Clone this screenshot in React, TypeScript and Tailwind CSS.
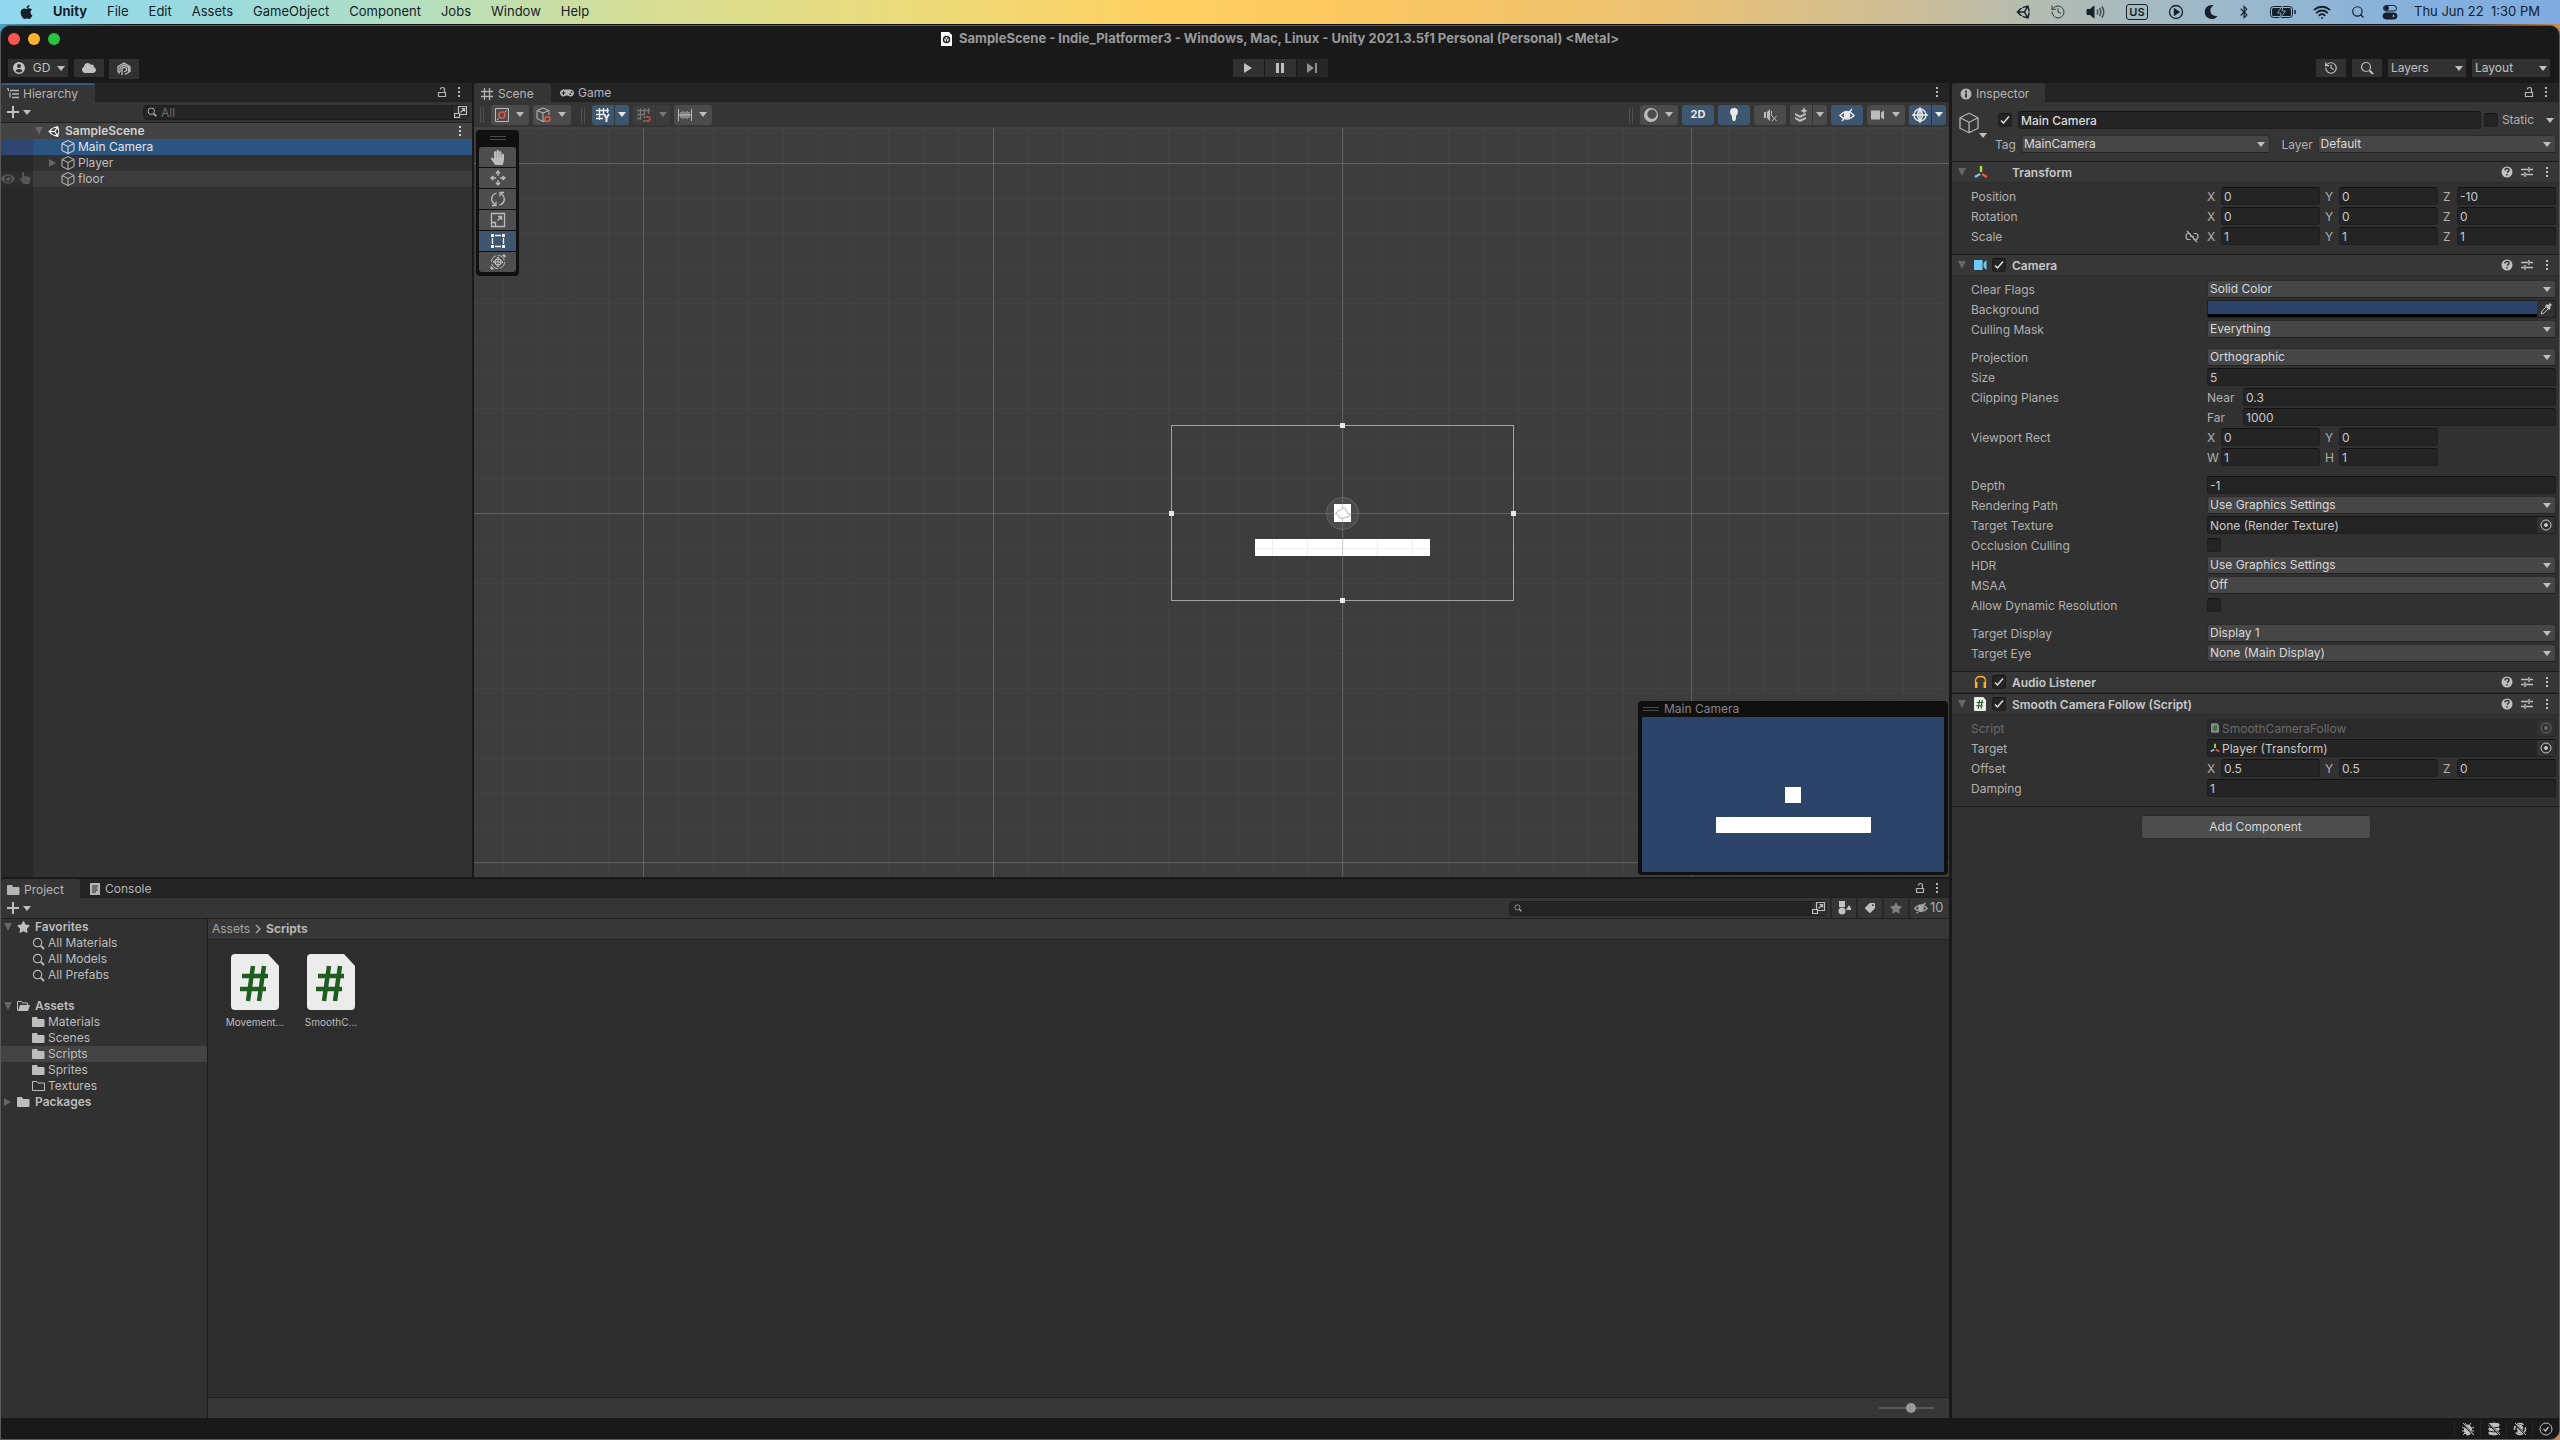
import React from "react";
import { FaApple, FaUnity, FaHandPaper, FaCloud, FaGamepad, FaMoon, FaStar, FaBluetoothB, FaEye, FaHandPointer, FaTag } from "react-icons/fa";
import { Wifi, Search, History } from "lucide-react";

type SvgProps = { className?: string; children?: React.ReactNode; box?: string; w?: number };

function Ico({ className = "size-4", children, box = "0 0 16 16", w = 1 }: SvgProps) {
  return (
    <svg className={"shrink-0 " + className} viewBox={box} fill="none" stroke="currentColor" strokeWidth={w}>
      {children}
    </svg>
  );
}

const Caret = ({ className = "w-2 h-[5px]" }: { className?: string }) => (
  <svg className={"shrink-0 " + className} viewBox="0 0 8 5" fill="currentColor">
    <path d="M0 0h8L4 5z" />
  </svg>
);

const Fold = ({ open = true }: { open?: boolean }) => (
  <svg className="size-2 shrink-0 text-[#666]" viewBox="0 0 8 8" fill="currentColor">
    {open ? <path d="M0 0h8L4 8z" /> : <path d="M0 0v8l7-4z" />}
  </svg>
);

const Dots = ({ className = "w-4 h-4" }: { className?: string }) => (
  <svg className={"shrink-0 " + className} viewBox="0 0 16 16" fill="currentColor">
    <path d="M7 3h2v2H7zM7 7h2v2H7zM7 11h2v2H7z" />
  </svg>
);

const Lock = () => (
  <Ico className="size-4">
    <path d="M4.500 8.500h7v4h-7z M10.500 8.500V5.500q0-2-2-2t-2 2" strokeWidth="1.200" />
  </Ico>
);

const Cube = ({ className = "size-4", w = 1 }: { className?: string; w?: number }) => (
  <Ico className={className} w={w}>
    <path d="M8 1.500l6 3v7l-6 3-6-3v-7z M2 4.500l6 3 6-3 M8 7.500v7" strokeLinejoin="round" />
  </Ico>
);

const Plus = () => (
  <Ico className="size-3" box="0 0 12 12" w={2}>
    <path d="M6 0v12M0 6h12" />
  </Ico>
);

const Folder = ({ open = false, empty = false }: { open?: boolean; empty?: boolean }) => (
  <svg className="h-3 w-[13px] shrink-0" viewBox="0 0 13 12" fill="currentColor">
    {open ? (
      <>
        <path d="M.5 10.500v-9h4l1 1.500h5v2" fill="none" stroke="currentColor" />
        <path d="M3 5h10l-2 6H1z" />
      </>
    ) : empty ? (
      <path d="M.5 1.500h4.500l1 1.500h6.500v7.500H.5z" fill="none" stroke="currentColor" />
    ) : (
      <path d="M0 2q0-1 1-1h4l1 2h5.500q1 0 1 1v6q0 1-1 1H1q-1 0-1-1z" />
    )}
  </svg>
);

const Mag = ({ className = "size-3.5" }: { className?: string }) => (
  <Ico className={className} box="0 0 14 14" w={1.2}>
    <circle cx="6" cy="6" r="4.500" />
    <path d="M9.500 9.500l3.500 3.500" strokeWidth="2" />
  </Ico>
);

const Jump = () => (
  <Ico className="size-3.5" box="0 0 14 14" w={1.2}>
    <path d="M4.500 8V1.500h8v8H6M.5 8.500h5v4h-5zM6.500 7.500l4-4M7.500 3.500h3v3" />
  </Ico>
);

const Axes = ({ className = "size-3.5" }: { className?: string }) => (
  <svg className={"shrink-0 " + className} viewBox="0 0 14 14" fill="none" strokeWidth="2.500">
    <path d="M7 1v6" stroke="#a6e22e" />
    <path d="M6 9l-5 3" stroke="#6cc9f7" />
    <path d="M8 9l5 3" stroke="#f1562f" />
  </svg>
);

const ScriptIcon = ({ className = "h-3.5 w-3", dim = false }: { className?: string; dim?: boolean }) => (
  <svg className={"shrink-0 " + className} viewBox="0 0 48 56">
    <path d="M4 0h33l11 12v40q0 4-4 4H4q-4 0-4-4V4q0-4 4-4z" fill={dim ? "#8a8a8a" : "#ececec"} />
    <path d="M22 12l-5 35M33 12l-5 35M11 22h26M9 35h26" stroke="#1e5c20" strokeWidth="4.500" fill="none" />
  </svg>
);

const EyeSlash = ({ className = "size-4" }: { className?: string }) => (
  <Ico className={className} w={1.5}>
    <path d="M1 8.500q7-8 14 0-7 7-14 0z M13 2L3 14" />
    <circle cx="8" cy="8" r="2.500" fill="currentColor" />
  </Ico>
);

/* ---------- macOS menu bar ---------- */

function MenuBar() {
  const items = ["File", "Edit", "Assets", "GameObject", "Component", "Jobs", "Window", "Help"];
  return (
    <header className="flex h-6 shrink-0 items-center justify-between bg-[linear-gradient(90deg,#90d8ee_0%,#9cdbdc_9%,#b2dfc0_16%,#d6de95_25%,#ebdc7d_35%,#fdd061_45%,#fcc85f_52%,#ecc273_65%,#cabd99_75%,#b2bcb4_80%,#9bb8cb_87%,#83b1df_95%,#7fabdf_100%)] text-[13px] text-[#14202a]">
      <nav className="flex items-center pl-[19px]">
        <button aria-label="Apple menu" className="mr-[19px]">
          <FaApple className="h-4 w-[15px]" />
        </button>
        <button className="mr-5 font-bold">Unity</button>
        <span className="flex gap-5">
          {items.map((i) => (
            <button key={i}>{i}</button>
          ))}
        </span>
      </nav>
      <div className="flex items-center pr-5">
        <div className="mr-4 flex items-center gap-5">
          <FaUnity className="-mr-0.5 size-4" />
          <History className="size-4 opacity-80" strokeWidth={1.5} />
          <Ico className="h-4 w-5" box="0 0 20 16">
            <path d="M1 5.500h3l4-3.500v12L4 10.500H1z" fill="currentColor" />
            <path d="M11 5.500q1.500 2.500 0 5M13.500 4q2.500 4 0 8M16 2.500q3.500 5.500 0 11" strokeWidth="1.500" opacity=".7" />
          </Ico>
          <span className="flex h-4 w-[22px] items-center justify-center rounded-[3px] border border-[#14202a] text-[11px] font-semibold">US</span>
          <Ico className="size-4" w={1.3}>
            <circle cx="8" cy="8" r="6.500" />
            <path d="M6.500 5v6l4.500-3z" fill="currentColor" />
          </Ico>
          <FaMoon className="size-3.5" />
          <FaBluetoothB className="h-3.5 w-3" />
          <Ico className="-mr-[3px] h-3.5 w-[26px]" box="0 0 26 14">
            <rect x=".5" y="1.500" width="22" height="11" rx="3" />
            <rect x="2" y="3" width="19" height="8" rx="1.500" fill="currentColor" stroke="none" />
            <path d="M25 5v4" strokeWidth="1.500" />
            <path d="M13 0L7.500 8h3.500l-1.500 6L15.500 6H12z" fill="currentColor" stroke="#a5bcc2" strokeWidth=".8" />
          </Ico>
          <Wifi className="size-[18px]" strokeWidth={2.5} />
          <Search className="-mr-[3px] size-3.5" strokeWidth={2} />
          <Ico className="size-4">
            <rect x="1.500" y="1.500" width="13" height="5.500" rx="2.700" />
            <rect x="1" y="9" width="14" height="6" rx="3" fill="currentColor" />
            <circle cx="4.500" cy="4.200" r="2" fill="currentColor" />
            <circle cx="11.500" cy="12" r="1.500" fill="#a5bcc2" />
          </Ico>
        </div>
        <span className="whitespace-pre">Thu Jun 22  1:30 PM</span>
      </div>
    </header>
  );
}

/* ---------- Window title and main toolbar ---------- */

function TopArea() {
  const box = "flex h-[18px] items-center bg-[#313131] text-[#c0c0c0]";
  return (
    <div className="shrink-0 bg-[#191919]">
      <div className="relative flex h-[26px] items-center justify-center">
        <div className="absolute left-[7px] flex gap-2">
          <button aria-label="Close" className="size-3 rounded-full bg-[#ff5450]" />
          <button aria-label="Minimize" className="size-3 rounded-full bg-[#fdb32d]" />
          <button aria-label="Zoom" className="size-3 rounded-full bg-[#29c340]" />
        </div>
        <h1 className="flex items-center gap-[7px] text-[13px] font-bold text-[#9a9a9a]">
          <svg className="h-3.5 w-[11px]" viewBox="0 0 11 14">
            <path d="M0 0h8l3 3v11H0z" fill="#fff" />
            <circle cx="5.500" cy="7.500" r="3" fill="none" stroke="#222" strokeWidth="1.500" />
            <path d="M5.500 7.500v3M5.500 7.500l-2.500-2M5.500 7.500l2.500-2" stroke="#222" />
          </svg>
          SampleScene - Indie_Platformer3 - Windows, Mac, Linux - Unity 2021.3.5f1 Personal (Personal) &lt;Metal&gt;
        </h1>
      </div>
      <div className="grid h-[31px] grid-cols-3 items-start px-[7px] pt-[7px] text-xs">
        <div className="flex items-start">
          <button className={box + " w-[60px] justify-between pl-1 pr-[3px] text-[#a4a4a4]"}>
            <Ico className="size-3.5" box="0 0 14 14" w={0}>
              <path fillRule="evenodd" d="M7 1a6 6 0 100 12A6 6 0 007 1zm0 2a2 2 0 110 4 2 2 0 010-4zM3.500 10q.5-2 3.500-2t3.500 2q-3.500 3-7 0z" fill="currentColor" />
            </Ico>
            GD
            <Caret />
          </button>
          <button aria-label="Cloud" className={box + " ml-1.5 w-[30px] justify-center"}>
            <FaCloud className="size-3.5" />
          </button>
          <button aria-label="Plastic SCM" className="ml-[5px] flex h-5 w-[30px] items-center justify-center bg-[#313131] text-[#c0c0c0]">
            <Ico className="size-4" w={1.3}>
              <path d="M3.500 12.500L2 10.500v-5L8 2l6 3.500v5L9 13.500 M6 14V7.500L8 6l2.500 1.500v2L8 11 M4 11V6.500L8 4l4.500 2.500v4" />
            </Ico>
          </button>
        </div>
        <div className="flex justify-center gap-px">
          <button aria-label="Play" className={box + " w-[31px] justify-center"}>
            <Ico className="size-3" box="0 0 12 12"><path d="M2 1v10l8-5z" fill="currentColor" stroke="none" /></Ico>
          </button>
          <button aria-label="Pause" className={box + " w-[31px] justify-center"}>
            <Ico className="size-3" box="0 0 12 12"><path d="M2 1h3v10H2zM7 1h3v10H7z" fill="currentColor" stroke="none" /></Ico>
          </button>
          <button aria-label="Step" className="flex h-[18px] w-[31px] items-center justify-center bg-[#262626] text-[#8f8f8f]">
            <Ico className="size-3" box="0 0 12 12"><path d="M1 1v10l7-5zM9 1h2v10H9z" fill="currentColor" stroke="none" /></Ico>
          </button>
        </div>
        <div className="flex justify-end gap-1.5 pr-0.5">
          <button aria-label="Undo history" className={box + " w-[30px] justify-center"}><History className="size-3.5" /></button>
          <button aria-label="Search" className={box + " w-[30px] justify-center"}><Mag /></button>
          <button className={box + " w-[78px] justify-between pl-[3px] pr-[3px] text-[#a4a4a4]"}>Layers<Caret /></button>
          <button className={box + " w-[78px] justify-between pl-[3px] pr-[3px] text-[#a4a4a4]"}>Layout<Caret /></button>
        </div>
      </div>
    </div>
  );
}

/* ---------- Shared panel parts ---------- */

function TabBar({ children, actions }: { children: React.ReactNode; actions?: React.ReactNode }) {
  return (
    <div className="flex h-[19px] shrink-0 items-stretch justify-between border-b border-[#202020] bg-[#242424] text-[#b4b4b4]">
      <div className="flex">{children}</div>
      <div className="flex items-center gap-px pr-px">{actions}</div>
    </div>
  );
}

function Tab({ icon, label, width, active, focus }: { icon: React.ReactNode; label: string; width: string; active?: boolean; focus?: boolean }) {
  return (
    <button
      className={
        "flex items-center gap-1 rounded-t-[3px] pl-1.5 text-xs " + width +
        (active ? " -mb-px bg-[#353535]" : "") + (focus ? " border-t-2 border-[#2c5d87]" : " pt-0.5")
      }
    >
      {icon}
      {label}
    </button>
  );
}

/* ---------- Hierarchy ---------- */

function Hierarchy() {
  return (
    <section aria-label="Hierarchy" className="flex w-[471px] shrink-0 flex-col bg-[#313131]">
      <TabBar actions={<><Lock /><Dots className="mr-1 size-4" /></>}>
        <Tab active focus label="Hierarchy" width="w-[94px]" icon={
          <Ico className="size-3" box="0 0 12 12" w={1.3}><path d="M3 2.500h9M5 6h7M5 9.500h7M0 1h2M1 2.500h1M3 4.500v5" /></Ico>
        } />
      </TabBar>
      <div className="flex h-[21px] shrink-0 items-center justify-between border-b border-[#202020] bg-[#353535] pl-1.5 pr-[3px] text-[#c0c0c0]">
        <button aria-label="Create" className="flex items-center gap-1"><Plus /><Caret /></button>
        <div className="flex h-[15px] w-[326px] items-center rounded-[4px] border border-[#1e1e1e] bg-[#242424] pl-[3px]">
          <Mag className="size-2.5" />
          <input aria-label="Search hierarchy" placeholder="All" className="ml-1 min-w-0 flex-1 bg-transparent text-xs leading-3 outline-none placeholder:text-[#6d6d6d]" />
          <span className="flex h-[13px] w-4 items-center justify-center border-l border-[#1e1e1e] bg-[#2d2d2d]"><Jump /></span>
        </div>
      </div>
      <div className="flex h-4 shrink-0 items-center justify-between bg-[#434343] pl-[34px] text-xs font-semibold text-[#d0d0d0]">
        <span className="flex items-center"><Fold /><FaUnity className="ml-[5px] mr-1 size-[13px] text-white" />SampleScene</span>
        <Dots className="mr-1 size-4" />
      </div>
      <ul className="flex-1 bg-[linear-gradient(90deg,#282828_32px,#313131_32px)] text-xs text-[#bdbdbd]">
        <li className="flex h-4 items-center bg-[linear-gradient(90deg,#2f4672_32px,#2a5580_32px)] pl-[59px] text-[#e4e4e4]"><Cube /><span className="ml-0.5">Main Camera</span></li>
        <li className="flex h-4 items-center pl-12"><Fold open={false} /><Cube className="ml-[3px] size-4" /><span className="ml-0.5">Player</span></li>
        <li className="flex h-4 items-center bg-[linear-gradient(90deg,#2d2d2d_32px,#3c3c3c_32px)]">
          <span className="flex w-[59px] gap-1 text-[#585858]"><FaEye className="size-3.5" /><FaHandPointer className="size-3" /></span>
          <Cube /><span className="ml-0.5">floor</span>
        </li>
      </ul>
    </section>
  );
}

/* ---------- Scene view ---------- */

const Grip = () => <span className="h-4 w-1 border-x border-[#505050]" />;

function SBtn({ children, w = "w-8", on, dim, left, right, label }: { children: React.ReactNode; w?: string; on?: boolean; dim?: boolean; left?: boolean; right?: boolean; label: string }) {
  return (
    <button
      aria-label={label}
      className={
        "flex h-5 items-center justify-center gap-1.5 " + w +
        (on ? " bg-[#3e566f] text-[#e8e8e8]" : dim ? " bg-[#3c3c3c] text-[#767676]" : " bg-[#4b4b4b] text-[#bcbcbc]") +
        (left ? " rounded-l-[3px]" : right ? " ml-px rounded-r-[3px]" : " rounded-[3px]")
      }
    >
      {children}
    </button>
  );
}

function SceneToolbar() {
  return (
    <div className="flex h-[26px] shrink-0 items-center justify-between border-b border-[#404040] bg-[#353535] pl-1.5 pr-[3px]">
      <div className="flex items-center">
        <Grip />
        <div className="ml-[7px] flex gap-1">
          <SBtn label="Pivot" w="w-[38px]">
            <Ico className="-ml-0.5 size-4"><path d="M1.500 1.500h13v13h-13z" /><path d="M3 13l2-2M11 5l2-2" /><circle cx="8" cy="8" r="3" stroke="#e2583a" strokeWidth="1.500" /></Ico><Caret />
          </SBtn>
          <SBtn label="Handle rotation" w="w-[38px]">
            <Ico className="-ml-0.5 size-4"><path d="M9 14l-2 .5-6-3v-8l6-2.500 6 2.500V8M1 3.500l6 2.500 6-2.500M7 6v8" /><circle cx="11.500" cy="12" r="2.500" stroke="#e2583a" strokeWidth="1.500" /></Ico><Caret />
          </SBtn>
        </div>
        <span className="ml-2.5 flex"><Grip /></span>
        <div className="ml-[7px] flex gap-1">
          <div className="flex">
            <SBtn label="Grid" on left w="w-[22px]">
              <Ico w={1.3}><path d="M4.500 1v12M8.500 1v7M12.500 1v5M1 3.500h13M1 7.500h8M1 11.500h7" /><path d="M9 7l2.500 4L14 7M11.500 10.500V15" strokeWidth="2" /></Ico>
            </SBtn>
            <SBtn label="Grid options" on right w="w-3.5"><Caret /></SBtn>
          </div>
          <div className="flex">
            <SBtn label="Snap" dim left w="w-[22px]">
              <Ico w={1.3}><path d="M4.500 1v12M8.500 1v6M12.500 1v6M1 3.500h13M1 7.500h8M1 11.500h4M7 10h2M7 14h2" /><path d="M9.500 10H12q2 0 2 2t-2 2H9.500" stroke="#a8503c" strokeWidth="2" /></Ico>
            </SBtn>
            <SBtn label="Snap options" dim right w="w-3.5"><Caret /></SBtn>
          </div>
          <SBtn label="Snap increment" w="w-[38px]">
            <Ico className="-ml-0.5 size-4"><path d="M1.500 2v12M14.500 2v12M4 5v6M6 4v8M8 5v6M10 4v8M12 5v6M1 8h14" /></Ico><Caret />
          </SBtn>
        </div>
      </div>
      <div className="flex items-center">
        <Grip />
        <div className="ml-[7px] flex gap-1">
          <SBtn label="Draw mode" w="w-[38px]">
            <Ico className="-ml-0.5 size-4"><path fillRule="evenodd" d="M8 1a7 7 0 100 14A7 7 0 008 1zm1 1.500a4.700 4.700 0 110 9.400 4.700 4.700 0 010-9.400z" fill="currentColor" stroke="none" /></Ico><Caret />
          </SBtn>
          <SBtn label="2D" on><span className="text-[11px] font-bold">2D</span></SBtn>
          <SBtn label="Scene lighting" on>
            <Ico><path d="M8 1a4 4 0 014 4q0 2-2 4v3l-1 2H7l-1-2V9Q4 7 4 5a4 4 0 014-4z" fill="currentColor" stroke="none" /></Ico>
          </SBtn>
          <SBtn label="Scene audio"><Ico><path d="M2 5h2v6H2zM5 5l3-3v12l-3-3z" fill="currentColor" stroke="none" /><path d="M9.500 4v5M10 9l4.500 5M14.500 9L10 14" /></Ico></SBtn>
          <div className="flex">
            <SBtn label="Effects" left w="w-[22px]"><Ico><path d="M2 6l5 2.500L13 6v2l-6 3-5-3zM2 10l5 2.500 6-2.500v2l-6 3-5-3zM11 0l1 2.500L14.500 4 12 5l-1 2-1-2-2.500-1L10 2.500z" fill="currentColor" stroke="none" /></Ico></SBtn>
            <SBtn label="Effects options" right w="w-3.5"><Caret /></SBtn>
          </div>
          <SBtn label="Hidden objects" on><EyeSlash /></SBtn>
          <SBtn label="Scene camera" w="w-[38px]"><Ico className="-ml-0.5 size-4"><path d="M1 3.500h9v9H1zM11 5.500l3-2v9l-3-2z" fill="currentColor" stroke="none" /></Ico><Caret /></SBtn>
          <div className="flex">
            <SBtn label="Gizmos" on left w="w-[22px]"><Ico w={1.4}><circle cx="8" cy="8" r="6" /><path d="M0 8h16M8 0v16M8 2q-5 6 0 12M8 2q5 6 0 12" /></Ico></SBtn>
            <SBtn label="Gizmo options" on right w="w-3.5"><Caret /></SBtn>
          </div>
        </div>
      </div>
    </div>
  );
}

function ToolPalette() {
  const tools: { name: string; icon: React.ReactNode }[] = [
    { name: "View", icon: <FaHandPaper className="size-[15px]" /> },
    { name: "Move", icon: <Ico w={1.3}><path d="M8 1v5M8 10v5M1 8h5M10 8h5M6 3.500L8 1l2 2.500M6 12.500L8 15l2-2.500M3.500 6L1 8l2.500 2M12.500 6L15 8l-2.500 2" /></Ico> },
    { name: "Rotate", icon: <Ico w={1.3}><path d="M6.500 2Q1 4 1.800 9q.7 3 3.200 4.500M9.500 14q5.500-2 4.700-7-.7-3-3.200-4.500M2 14.500h4v-4M14 1.500h-4v4" /></Ico> },
    { name: "Scale", icon: <Ico w={1.3}><path d="M1.500 1.500h13v13h-13zM1.500 10.500h4v4M7.500 8.500l4-4M8 4.500h3.500V8" /></Ico> },
    { name: "Rect", icon: <Ico w={1.3}><path d="M5 2.500h6M5 13.500h6M2.500 5v6M13.500 5v6" /><path d="M1 1h3v3H1zM12 1h3v3h-3zM1 12h3v3H1zM12 12h3v3h-3z" fill="currentColor" stroke="none" /></Ico> },
    { name: "Transform", icon: <Ico><circle cx="8" cy="8" r="6.500" strokeDasharray="8 2" /><path d="M8 3v10M3 8h10M6.500 4.500L8 3l1.500 1.500M6.500 11.500L8 13l1.500-1.500M4.500 6.500L3 8l1.500 1.500M11.500 6.500L13 8l-1.500 1.500M5.500 5.500h5v5h-5z" /><path d="M12.500 1H15v2.500zM1 12.500V15h2.500z" fill="currentColor" /></Ico> },
  ];
  return (
    <div className="absolute left-0.5 top-0.5 w-[43px] rounded-[4px] bg-[#101010] px-[3px] pb-1 pt-1.5">
      <div className="mx-auto mb-[7px] h-1 w-4 border-y border-[#4c4c4c]" />
      <div className="flex flex-col gap-px overflow-hidden rounded-[3px]">
        {tools.map((t) => (
          <button key={t.name} aria-label={t.name} className={"flex h-5 items-center justify-center " + (t.name === "Rect" ? "bg-[#3e566f] text-[#f0f0f0]" : "bg-[#4e4e4e] text-[#bcbcbc]")}>
            {t.icon}
          </button>
        ))}
      </div>
    </div>
  );
}

function SceneView() {
  const vert = [169, 519, 868, 1217];
  const horz = [35, 385, 734];
  return (
    <div className="relative min-h-0 flex-1 overflow-hidden bg-[#3d3d3d]">
      <svg className="absolute inset-0 size-full" shapeRendering="crispEdges">
        <defs>
          <pattern id="minor" width="35" height="35" x="29" y="0" patternUnits="userSpaceOnUse">
            <path d="M0 .5h35M.5 0v35" stroke="#424242" />
          </pattern>
        </defs>
        <rect width="100%" height="100%" fill="url(#minor)" />
        <circle cx="868.500" cy="385.500" r="16" fill="#4a4a4a" stroke="#666" shapeRendering="auto" />
        <rect x="860" y="376" width="17" height="18" fill="#fff" />
        <rect x="781" y="411" width="175" height="17" fill="#fff" />
        <path d="M781 420.500h175M798.500 411v17M833.500 411v17M903.500 411v17M938.500 411v17" stroke="#efefef" />
        {vert.map((x) => <line key={x} x1={x + 0.5} x2={x + 0.5} y1="0" y2="100%" stroke="#8a8a8a" strokeOpacity=".45" />)}
        {horz.map((y) => <line key={y} y1={y + 0.5} y2={y + 0.5} x1="0" x2="100%" stroke="#8a8a8a" strokeOpacity=".45" />)}
        <path d="M862 385q2-3 5-3 1-3 4-2l2 3v2l3 1v2l-3 1q-3 2-7 1z" fill="#fff" stroke="#b5b5b5" shapeRendering="auto" />
        <rect x="697.500" y="297.500" width="342" height="175" fill="none" stroke="#a4a4a4" />
        <path d="M866 295h5v5h-5zM866 470h5v5h-5zM695 383h5v5h-5zM1037 383h5v5h-5z" fill="#e8e8e8" />
      </svg>
      <ToolPalette />
      <div className="absolute bottom-0.5 right-px rounded-[4px] bg-[#101010] px-1 pb-[3px]">
        <div className="flex h-4 items-center gap-[5px] pl-px text-xs text-[#858585]">
          <span className="h-1 w-4 border-y border-[#4c4c4c]" />
          Main Camera
        </div>
        <svg className="h-[155px] w-[302px]" viewBox="0 0 302 155" shapeRendering="crispEdges">
          <rect width="302" height="155" fill="#2c436a" />
          <rect x="143" y="70" width="16" height="16" fill="#fff" />
          <rect x="74" y="100" width="155" height="16" fill="#fff" />
        </svg>
      </div>
    </div>
  );
}

function Scene() {
  return (
    <section aria-label="Scene" className="flex min-w-0 flex-1 flex-col">
      <TabBar actions={<Dots className="mr-[3px] size-4" />}>
        <Tab active label="Scene" width="w-[77px]" icon={<Ico className="size-3.5" box="0 0 14 14" w={1.3}><path d="M4.500 1v12M9.500 1v12M1 4.500h12M1 9.500h12" /></Ico>} />
        <Tab label="Game" width="w-[70px]" icon={<FaGamepad className="ml-[3px] size-3.5" />} />
      </TabBar>
      <SceneToolbar />
      <SceneView />
    </section>
  );
}

/* ---------- Project ---------- */

function TreeRow({ label, icon, depth = 1, selected, bold, fold }: { label: string; icon: React.ReactNode; depth?: number; selected?: boolean; bold?: boolean; fold?: boolean }) {
  return (
    <li className={"flex h-4 items-center " + (depth ? "gap-[3px] pl-[31px] " : "gap-[5px] pl-[3px] ") + (selected ? "bg-[#444444] " : "") + (bold ? "font-semibold" : "")}>
      {!depth && <Fold open={fold} />}
      {icon}
      {label}
    </li>
  );
}

function Project() {
  const sep = "flex h-full items-center justify-center border-l-2 border-[#272727] w-[26px]";
  return (
    <section aria-label="Project" className="flex min-h-0 flex-[539_1_0%] flex-col bg-[#2d2d2d]">
      <TabBar actions={<><Lock /><Dots className="mr-[3px] size-4" /></>}>
        <Tab active label="Project" width="w-[79px]" icon={<Folder />} />
        <Tab label="Console" width="w-20" icon={
          <Ico className="ml-[3px] size-3" box="0 0 12 12"><path d="M1 0h10v12H1z" fill="currentColor" stroke="none" /><path d="M3 3h6M3 5h5M3 7h6M3 9h4" stroke="#242424" /></Ico>
        } />
      </TabBar>
      <div className="flex h-[21px] shrink-0 items-center justify-between border-b border-[#202020] bg-[#353535] pl-1.5 text-[#c0c0c0]">
        <button aria-label="Create" className="flex items-center gap-1"><Plus /><Caret /></button>
        <div className="flex h-full items-center">
          <div className="mr-[3px] flex h-[15px] w-[318px] items-center rounded-[4px] border border-[#1e1e1e] bg-[#242424] pl-1">
            <Mag className="size-2" />
            <input aria-label="Search project" className="min-w-0 flex-1 bg-transparent text-xs leading-3 outline-none" />
            <span className="flex h-[13px] w-4 items-center justify-center border-l border-[#1e1e1e] bg-[#2d2d2d]"><Jump /></span>
          </div>
          <button aria-label="Search by type" className={sep}><Ico className="size-3.5" box="0 0 14 14"><path d="M2 0h6v6H2z M9 9l3-5 3 5z" fill="currentColor" stroke="none" /><circle cx="5" cy="10" r="3.500" fill="currentColor" stroke="none" /></Ico></button>
          <button aria-label="Search by label" className={sep}><FaTag className="size-2.5 -scale-x-100" /></button>
          <button aria-label="Save search" className={sep + " text-[#7f7f7f]"}><FaStar className="size-3" /></button>
          <button aria-label="Hidden packages" className="flex h-full w-[41px] items-center gap-0.5 border-l-2 border-[#272727] pl-1 text-[13px] text-[#a8a8a8]"><EyeSlash className="size-3.5" />10</button>
        </div>
      </div>
      <div className="flex min-h-0 flex-1 text-xs text-[#bdbdbd]">
        <nav className="w-[207px] shrink-0 border-r border-[#1c1c1c] bg-[#313131]">
          <ul>
            <TreeRow depth={0} bold fold label="Favorites" icon={<FaStar className="size-3 w-[13px]" />} />
            {["All Materials", "All Models", "All Prefabs"].map((l) => <TreeRow key={l} label={l} icon={<Mag className="size-[13px]" />} />)}
          </ul>
          <ul className="mt-[15px]">
            <TreeRow depth={0} bold fold label="Assets" icon={<Folder open />} />
            {["Materials", "Scenes", "Scripts", "Sprites"].map((l) => <TreeRow key={l} label={l} selected={l === "Scripts"} icon={<Folder />} />)}
            <TreeRow label="Textures" icon={<Folder empty />} />
            <TreeRow depth={0} bold fold={false} label="Packages" icon={<Folder />} />
          </ul>
        </nav>
        <div className="flex min-w-0 flex-1 flex-col">
          <div className="flex h-[21px] shrink-0 items-center border-b border-[#202020] bg-[#373737] pl-1 text-[#a4a4a4]">
            <button>Assets</button>
            <Ico className="mx-[5px] h-2.5 w-1.5" box="0 0 6 10" w={1.5}><path d="M1 1l4 4-4 4" /></Ico>
            <button className="font-bold text-[#b4b4b4]">Scripts</button>
          </div>
          <div className="flex flex-1 items-start gap-3 pl-[15px] pt-3.5">
            {["Movement...", "SmoothC..."].map((f) => (
              <figure key={f} className="flex w-16 flex-col items-center">
                <ScriptIcon className="h-14 w-12" />
                <figcaption className="mt-1 text-[10px] leading-4">{f}</figcaption>
              </figure>
            ))}
          </div>
          <div className="flex h-[21px] shrink-0 items-center justify-end border-t border-[#202020] bg-[#373737] pr-[15px]">
            <input type="range" aria-label="Icon size" min={0} max={100} defaultValue={60} className="h-2.5 w-[55px] appearance-none bg-[linear-gradient(#5a5a5a,#5a5a5a)] bg-[length:100%_2px] bg-center bg-no-repeat [&::-webkit-slider-thumb]:size-2.5 [&::-webkit-slider-thumb]:appearance-none [&::-webkit-slider-thumb]:rounded-full [&::-webkit-slider-thumb]:bg-[#999]" />
          </div>
        </div>
      </div>
    </section>
  );
}

/* ---------- Inspector ---------- */

const fieldCls = "h-[18px] min-w-0 rounded-[3px] border border-[#1f1f1f] border-t-[#121212] bg-[#242424] pt-px text-xs text-[#c8c8c8] outline-none";

function Check({ label, on }: { label: string; on?: boolean }) {
  return (
    <span className="relative flex size-3.5 shrink-0">
      <input type="checkbox" aria-label={label} defaultChecked={on} className="peer size-3.5 appearance-none rounded-[3px] border border-[#1f1f1f] border-t-[#121212] bg-[#242424]" />
      <svg className="pointer-events-none absolute inset-0 hidden size-3.5 text-[#e0e0e0] peer-checked:block" viewBox="0 0 14 14" fill="none" stroke="currentColor" strokeWidth="1.500">
        <path d="M3 7.500l2.500 2.500L11 3.500" />
      </svg>
    </span>
  );
}

function Drop({ value, label, className = "" }: { value: string; label: string; className?: string }) {
  return (
    <span className={"relative flex min-w-0 flex-1 " + className}>
      <select aria-label={label} className="h-[18px] w-full appearance-none rounded-[3px] border border-[#2c2c2c] border-b-[#222] bg-[#464646] pb-px pl-0.5 text-xs text-[#dadada]">
        <option>{value}</option>
      </select>
      <Caret className="pointer-events-none absolute right-[5px] top-[7px] h-[5px] w-2 text-[#c0c0c0]" />
    </span>
  );
}

function Row({ label, dim, extra, children }: { label?: string; dim?: boolean; extra?: React.ReactNode; children: React.ReactNode }) {
  return (
    <div className="flex h-[18px] items-center">
      <span className={"flex w-[236px] shrink-0 items-center justify-between pr-2 pt-0.5 " + (dim ? "text-[#6a6a6a]" : "")}>{label}{extra}</span>
      <div className="flex min-w-0 flex-1 items-center">{children}</div>
    </div>
  );
}

function Field({ value, label }: { value: string; label: string }) {
  return <input aria-label={label} defaultValue={value} className={fieldCls + " w-full flex-1 pl-0.5"} />;
}

function Vec({ name, parts }: { name: string; parts: [string, string][] }) {
  return (
    <div className="grid flex-1 grid-cols-3 gap-[5px]">
      {parts.map(([k, v]) => (
        <label key={k} className="flex min-w-0 items-center">
          <span className="w-3.5 shrink-0 pt-px">{k}</span>
          <input aria-label={name + " " + k} defaultValue={v} className={fieldCls + " w-full flex-1 pl-0.5"} />
        </label>
      ))}
    </div>
  );
}

function ObjectField({ value, icon, dim }: { value: string; icon?: React.ReactNode; dim?: boolean }) {
  return (
    <button className={"flex h-[18px] flex-1 items-center rounded-[3px] border pl-0.5 text-xs " + (dim ? "border-[#272727] bg-[#2a2a2a] text-[#6a6a6a]" : "border-[#1f1f1f] border-t-[#121212] bg-[#242424] text-[#c8c8c8]")}>
      {icon}
      <span className="flex-1 pt-0.5 text-left">{value}</span>
      <span className="flex h-4 w-[18px] items-center justify-center bg-[#313131]">
        <Ico className="size-3" box="0 0 12 12"><circle cx="6" cy="6" r="5" /><circle cx="6" cy="6" r="1.500" fill="currentColor" /></Ico>
      </span>
    </button>
  );
}

function Component({ title, icon, check = true, fold = true, children }: { title: string; icon: React.ReactNode; check?: boolean; fold?: boolean; children?: React.ReactNode }) {
  return (
    <section className="border-t border-[#1a1a1a]">
      <header className="flex h-[21px] items-center border-b border-[#2c2c2c] bg-[#373737] pl-1.5 pr-1 text-[#c0c0c0]">
        <span className="flex w-3.5">{fold && <Fold />}</span>
        <span className="flex w-5 items-center pl-0.5">{icon}</span>
        <span className="flex w-5">{check && <Check label={title + " enabled"} on />}</span>
        <h2 className="flex-1 pt-0.5 font-semibold text-[#c8c8c8]">{title}</h2>
        <span className="flex items-center gap-[5px]">
          <svg className="mr-px size-3.5" viewBox="0 0 14 14"><circle cx="7" cy="7" r="5.500" fill="currentColor" /><path d="M5 5.500q0-2 2-2t2 1.700q0 1.300-2 2.300M7 9v1.500" fill="none" stroke="#373737" strokeWidth="1.500" /></svg>
          <Ico className="size-3.5" box="0 0 14 14" w={1.4}><path d="M1 4.500h7M10 4.500h3M9 2v5M1 9.500h3M6 9.500h7M5 7v5" /></Ico>
          <Dots />
        </span>
      </header>
      {children && <div className="space-y-0.5 pb-[9px] pl-[19px] pr-[3px] pt-1">{children}</div>}
    </section>
  );
}

const Gap = () => <div className="h-1.5" />;

function Inspector() {
  return (
    <aside aria-label="Inspector" className="flex w-[607px] shrink-0 flex-col bg-[#313131] text-xs text-[#b0b0b0]">
      <TabBar actions={<><Lock /><Dots className="mr-1 size-4" /></>}>
        <Tab active label="Inspector" width="w-[93px]" icon={
          <svg className="ml-0.5 size-3" viewBox="0 0 12 12"><circle cx="6" cy="6" r="5.500" fill="currentColor" /><path d="M6 2.500v2M6 5.500v4" stroke="#353535" strokeWidth="2" /></svg>
        } />
      </TabBar>
      <div className="flex bg-[#353535] pb-2 pl-[5px] pr-[3px] pt-[9px]">
        <div className="flex w-[38px] items-start">
          <Cube className="size-6" w={0.9} />
          <Caret className="mt-[22px] -ml-0.5 h-[5px] w-2 text-[#c0c0c0]" />
        </div>
        <div className="min-w-0 flex-1 space-y-1.5">
          <div className="flex items-center">
            <span className="ml-[3px] mr-1.5 flex"><Check label="Active" on /></span>
            <input aria-label="Object name" defaultValue="Main Camera" className={fieldCls + " flex-1 pl-0.5 font-medium text-[#dadada]"} />
            <label className="ml-[3px] flex items-center gap-1"><Check label="Static" />Static</label>
            <Caret className="ml-3 mr-0.5 h-[5px] w-2 text-[#c0c0c0]" />
          </div>
          <div className="flex items-center">
            <span className="w-[26px] shrink-0 pt-px">Tag</span>
            <Drop label="Tag" value="MainCamera" className="flex-[248_1_0%]" />
            <span className="w-12 shrink-0 pl-3 pt-px">Layer</span>
            <Drop label="Layer" value="Default" className="flex-[238_1_0%]" />
          </div>
        </div>
      </div>
      <Component title="Transform" icon={<Axes />} check={false}>
        <Row label="Position"><Vec name="Position" parts={[["X", "0"], ["Y", "0"], ["Z", "-10"]]} /></Row>
        <Row label="Rotation"><Vec name="Rotation" parts={[["X", "0"], ["Y", "0"], ["Z", "0"]]} /></Row>
        <Row label="Scale" extra={<Ico className="size-3.5" box="0 0 14 14" w={1.2}><path d="M5.500 9.500h-2q-2.500 0-2.500-3t2.500-3h2M8.500 3.500h2q2.500 0 2.500 3t-2.500 3h-2M2 1l10 11M5 6.500h4" /></Ico>}>
          <Vec name="Scale" parts={[["X", "1"], ["Y", "1"], ["Z", "1"]]} />
        </Row>
      </Component>
      <Component title="Camera" icon={<svg className="h-3 w-3.5" viewBox="0 0 14 12" fill="#6ecbf8"><path d="M0 1h8.500v10H0zM9.500 4L12.500 1v10L9.500 8z" /></svg>}>
        <Row label="Clear Flags"><Drop label="Clear Flags" value="Solid Color" /></Row>
        <Row label="Background">
          <button aria-label="Background color" className="flex h-[18px] flex-1 border border-[#202020]">
            <span className="h-full flex-1 border-b-[3px] border-black bg-[#2c436a]" />
            <span className="flex h-full w-[18px] items-center justify-center text-[#c0c0c0]">
              <Ico className="size-3.5" box="0 0 14 14"><path d="M2 12l1-3 5-5 2 2-5 5z" /><path d="M7 3l4 4M9 5l3-3" strokeWidth="2.500" /></Ico>
            </span>
          </button>
        </Row>
        <Row label="Culling Mask"><Drop label="Culling Mask" value="Everything" /></Row>
        <Gap />
        <Row label="Projection"><Drop label="Projection" value="Orthographic" /></Row>
        <Row label="Size"><Field label="Size" value="5" /></Row>
        <Row label="Clipping Planes"><span className="w-9 shrink-0 pt-px">Near</span><Field label="Near" value="0.3" /></Row>
        <Row><span className="w-9 shrink-0 pt-px">Far</span><Field label="Far" value="1000" /></Row>
        <Row label="Viewport Rect"><Vec name="Viewport" parts={[["X", "0"], ["Y", "0"]]} /></Row>
        <Row><Vec name="Viewport" parts={[["W", "1"], ["H", "1"]]} /></Row>
        <Gap />
        <Row label="Depth"><Field label="Depth" value="-1" /></Row>
        <Row label="Rendering Path"><Drop label="Rendering Path" value="Use Graphics Settings" /></Row>
        <Row label="Target Texture"><ObjectField value="None (Render Texture)" /></Row>
        <Row label="Occlusion Culling"><Check label="Occlusion Culling" /></Row>
        <Row label="HDR"><Drop label="HDR" value="Use Graphics Settings" /></Row>
        <Row label="MSAA"><Drop label="MSAA" value="Off" /></Row>
        <Row label="Allow Dynamic Resolution"><Check label="Allow Dynamic Resolution" /></Row>
        <Gap />
        <Row label="Target Display"><Drop label="Target Display" value="Display 1" /></Row>
        <Row label="Target Eye"><Drop label="Target Eye" value="None (Main Display)" /></Row>
      </Component>
      <Component title="Audio Listener" fold={false} icon={<Ico className="size-3.5 text-[#fdb022]" box="0 0 14 14" w={1.3}><path d="M1.500 9V6q0-4.500 5-4.500t5 4.500v3" /><path d="M2.200 7v6M10.800 7v6" strokeWidth="2.500" /></Ico>} />
      <Component title="Smooth Camera Follow (Script)" icon={<ScriptIcon />}>
        <Row dim label="Script"><ObjectField dim value="SmoothCameraFollow" icon={<ScriptIcon dim className="ml-px mr-[3px] h-2.5 w-2" />} /></Row>
        <Row label="Target"><ObjectField value="Player (Transform)" icon={<Axes className="mr-0.5 size-2.5" />} /></Row>
        <Row label="Offset"><Vec name="Offset" parts={[["X", "0.5"], ["Y", "0.5"], ["Z", "0"]]} /></Row>
        <Row label="Damping"><Field label="Damping" value="1" /></Row>
      </Component>
      <div className="flex justify-center border-t border-[#1a1a1a] pt-2">
        <button className="h-6 w-[230px] rounded-[3px] border border-[#2b2b2b] bg-[#4d4d4d] text-[#d6d6d6]">Add Component</button>
      </div>
    </aside>
  );
}

function StatusBar() {
  const cell = "flex h-4 w-[26px] items-center justify-center border-l border-[#242424]";
  return (
    <footer className="flex h-[21px] shrink-0 items-center justify-end bg-[#191919] pr-px text-[#c0c0c0]">
      <button aria-label="Debug mode" className={cell}><Ico className="size-3.5" box="0 0 14 14"><ellipse cx="7" cy="8" rx="3.500" ry="5" fill="currentColor" /><path d="M1 5l3 2M1 9h3M2 13l2-2M13 5l-3 2M13 9h-3M12 13l-2-2M4 1l2 3M10 1L8 4" /><path d="M1 1l12 12" stroke="#191919" strokeWidth="2" /><path d="M2 1l11 12" /></Ico></button>
      <button aria-label="Cache server" className={cell}><Ico className="size-3.5" box="0 0 14 14"><path d="M2 2q5-2 10 0v2q-5 2-10 0zM2 6q5 2 10 0v2q-5 2-10 0zM2 10q5 2 10 0v2q-5 2-10 0z" fill="currentColor" /><path d="M1 1l12 12" stroke="#191919" strokeWidth="2" /><path d="M2 1l11 12" /></Ico></button>
      <button aria-label="Auto generate lighting" className={cell}><Ico className="size-3.5" box="0 0 14 14"><circle cx="7" cy="7" r="5.500" strokeWidth="1.500" strokeDasharray="13 3" /><path d="M7 3a3 3 0 012 5v3H5V8a3 3 0 012-5z" fill="currentColor" /><path d="M1 1l12 12" stroke="#191919" strokeWidth="2" /><path d="M2 1l11 12" /></Ico></button>
      <button aria-label="Background tasks" className={cell}><Ico className="size-3.5" box="0 0 14 14"><circle cx="7" cy="7" r="6" /><path d="M4.500 7l2 2 3-4" strokeWidth="1.300" /></Ico></button>
    </footer>
  );
}

export default function App() {
  return (
    <div className="flex h-screen flex-col overflow-hidden bg-[linear-gradient(90deg,#4f9fc4_0%,#111_5%,#111_95%,#c98d5a_100%)] font-['Inter',sans-serif] text-xs">
      <MenuBar />
      <div className="mt-px flex min-h-0 flex-1 flex-col overflow-hidden rounded-[10px] rounded-bl-none border border-[#5a5a5a] bg-[#191919]">
        <TopArea />
        <main className="flex min-h-0 flex-1 gap-[3px]">
          <div className="flex min-w-0 flex-1 flex-col gap-0.5">
            <div className="flex min-h-0 flex-[794_1_0%] gap-0.5">
              <Hierarchy />
              <Scene />
            </div>
            <Project />
          </div>
          <Inspector />
        </main>
        <StatusBar />
      </div>
    </div>
  );
}
